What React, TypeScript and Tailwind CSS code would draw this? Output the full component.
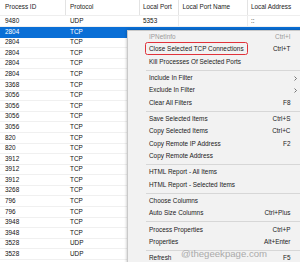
import React from "react";

const rows: string[][] = [
  ["9480", "UDP", "5353", "", "::"],
  ["2804", "TCP"],
  ["2804", "TCP"],
  ["2804", "TCP"],
  ["2804", "TCP"],
  ["2804", "TCP"],
  ["3368", "TCP"],
  ["3056", "TCP"],
  ["3056", "TCP"],
  ["3056", "TCP"],
  ["3056", "TCP"],
  ["820", "TCP"],
  ["820", "TCP"],
  ["3912", "TCP"],
  ["3912", "TCP"],
  ["3912", "TCP"],
  ["3268", "TCP"],
  ["796", "TCP"],
  ["796", "TCP"],
  ["3948", "TCP"],
  ["3948", "TCP"],
  ["3528", "UDP"],
  ["3528", "UDP"],
];

type Item =
  | { sep: true }
  | { sep?: false; label: string; key?: string; sub?: boolean; disabled?: boolean; boxed?: boolean };

const menu: Item[] = [
  { label: "IPNetInfo", key: "Ctrl+I", disabled: true },
  { label: "Close Selected TCP Connections", key: "Ctrl+T", boxed: true },
  { label: "Kill Processes Of Selected Ports" },
  { sep: true },
  { label: "Include In Filter", sub: true },
  { label: "Exclude In Filter", sub: true },
  { label: "Clear All Filters", key: "F8" },
  { sep: true },
  { label: "Save Selected Items", key: "Ctrl+S" },
  { label: "Copy Selected Items", key: "Ctrl+C" },
  { label: "Copy Remote IP Address", key: "F2" },
  { label: "Copy Remote Address" },
  { sep: true },
  { label: "HTML Report - All Items" },
  { label: "HTML Report - Selected Items" },
  { sep: true },
  { label: "Choose Columns" },
  { label: "Auto Size Columns", key: "Ctrl+Plus" },
  { sep: true },
  { label: "Process Properties", key: "Ctrl+P" },
  { label: "Properties", key: "Alt+Enter" },
  { sep: true },
  { label: "Refresh", key: "F5" },
];

export default function App() {
  const font = { fontFamily: '"Liberation Sans", Arial, sans-serif' };
  return (
    <div
      className="relative w-[300px] h-[262px] overflow-hidden bg-white text-[6.4px] leading-none text-black"
      style={font}
    >
      {/* header */}
      <div className="flex h-[16.4px] border-b border-[#eeeeee] text-[#222]">
        <div className="w-[66px] shrink-0 flex items-center pl-[5px] border-r border-[#e3e3e3]">Process ID</div>
        <div className="w-[73.5px] shrink-0 flex items-center pl-[4px] border-r border-[#e3e3e3]">Protocol</div>
        <div className="w-[39.5px] shrink-0 flex items-center pl-[3.5px] border-r border-[#e3e3e3]">Local Port</div>
        <div className="w-[69px] shrink-0 flex items-center pl-[3.5px] border-r border-[#e3e3e3]">Local Port Name</div>
        <div className="flex-1 flex items-center pl-[3px]">Local Address</div>
      </div>
      {/* rows */}
      {rows.map((r, i) => {
        const sel = i === 1;
        return (
          <div
            key={i}
            className={
              sel
                ? "flex h-[10.6px] bg-[#0a6fd6] text-white"
                : "flex h-[10.6px] border-b border-[#f0f0f0] text-[#111]"
            }
          >
            <div className="w-[66px] shrink-0 flex items-center pl-[5px]">{r[0]}</div>
            <div className="w-[73.5px] shrink-0 flex items-center pl-[4px]">{r[1]}</div>
            <div className={i === 0 ? "w-[39.5px] shrink-0 flex items-center pl-[3.5px] border-r border-[#ececec]" : "w-[39.5px] shrink-0 flex items-center pl-[3.5px]"}>{r[2] ?? ""}</div>
            <div className={i === 0 ? "w-[69px] shrink-0 flex items-center pl-[3.5px] border-r border-[#ececec]" : "w-[69px] shrink-0 flex items-center pl-[3.5px]"}>{r[3] ?? ""}</div>
            <div className="flex-1 flex items-center pl-[3px]">{r[4] ?? ""}</div>
          </div>
        );
      })}

      {/* context menu */}
      <div className="absolute left-[127px] top-[30px] w-[190px] h-[250px] bg-[#f2f2f2] border border-[#c9c9c9] shadow-[0_0_3px_rgba(0,0,0,0.28)] pt-[0.2px] text-[#1a1a1a]">
        {menu.map((m, i) =>
          m.sep ? (
            <div key={i} className="h-[4.1px] flex items-center pl-[18px]">
              <div className="h-px w-full bg-[#d7d7d7]" />
            </div>
          ) : (
            <div key={i} className={m.disabled ? "relative h-[12.3px] flex items-center text-[#9a9a9a]" : "relative h-[12.3px] flex items-center"}>
              {m.boxed && (
                <div className="absolute left-[16.5px] w-[103.5px] top-[-1px] h-[12.8px] rounded-[2.5px] border-[1.3px] border-[#e0323a]" />
              )}
              <div className="w-[162.5px] shrink-0 flex justify-between pl-[21px]">
                <span>{m.label}</span>
                <span>{m.key ?? ""}</span>
              </div>
              <div className="w-[6px] ml-[3px] flex items-center">
                {m.sub && (
                  <svg width="3" height="5" viewBox="0 0 3 5">
                    <path d="M0.5 0.5 L2.5 2.5 L0.5 4.5" fill="none" stroke="#555" strokeWidth="0.8" />
                  </svg>
                )}
              </div>
            </div>
          )
        )}
      </div>

      {/* watermark */}
      <div
        className="absolute left-[181px] top-[249px] text-[9.6px] leading-none text-[#a3a3a3] opacity-90"
        style={font}
      >
        @thegeekpage.com
      </div>
    </div>
  );
}
